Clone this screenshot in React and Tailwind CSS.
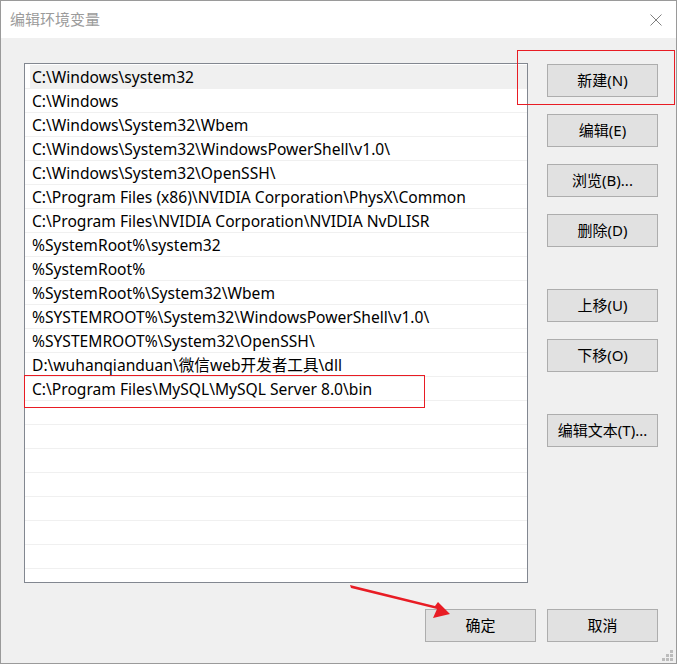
const paths = [
  "C:\\Windows\\system32",
  "C:\\Windows",
  "C:\\Windows\\System32\\Wbem",
  "C:\\Windows\\System32\\WindowsPowerShell\\v1.0\\",
  "C:\\Windows\\System32\\OpenSSH\\",
  "C:\\Program Files (x86)\\NVIDIA Corporation\\PhysX\\Common",
  "C:\\Program Files\\NVIDIA Corporation\\NVIDIA NvDLISR",
  "%SystemRoot%\\system32",
  "%SystemRoot%",
  "%SystemRoot%\\System32\\Wbem",
  "%SYSTEMROOT%\\System32\\WindowsPowerShell\\v1.0\\",
  "%SYSTEMROOT%\\System32\\OpenSSH\\",
  "D:\\wuhanqianduan\\微信web开发者工具\\dll",
  "C:\\Program Files\\MySQL\\MySQL Server 8.0\\bin",
];

const emptyRows = 8;

function Button({ children, className = "" }) {
  return (
    <button
      className={
        "flex h-[33px] w-[111px] items-center justify-center border border-[#adadad] bg-[#e1e1e1] text-[15px] text-black " +
        className
      }
    >
      {children}
    </button>
  );
}

function Grip() {
  // resize dots, bottom right
  const dots = [
    [8, 0],
    [4, 4],
    [8, 4],
    [0, 8],
    [4, 8],
    [8, 8],
  ];
  return (
    <svg width="11" height="11" className="absolute bottom-[2px] right-[3px]">
      {dots.map(([x, y], i) => (
        <rect key={i} x={x} y={y} width="3" height="3" fill="#bcbcbc" />
      ))}
    </svg>
  );
}

export default function App() {
  return (
    <div
      className="relative flex h-[664px] w-[677px] flex-col border border-[#9a9a9a] bg-[#f0f0f0]"
      style={{ fontFamily: '"Noto Sans", "Noto Sans CJK SC", sans-serif' }}
    >
      {/* TITLE BAR */}
      <div className="flex h-[37px] shrink-0 items-center justify-between bg-white pl-[9px] pr-[14px]">
        <span className="text-[15px] text-[#9b9b9b]">编辑环境变量</span>
        <svg width="12" height="12" viewBox="0 0 12 12">
          <path d="M0.5 0.5 L11.5 11.5 M11.5 0.5 L0.5 11.5" stroke="#808080" strokeWidth="1" />
        </svg>
      </div>

      {/* BODY */}
      <div className="flex flex-1 flex-col pl-[23px] pr-[18px] pt-[25px]">
        <div className="flex gap-[19px]">
          {/* LIST */}
          <div className="h-[520px] w-[504px] overflow-hidden border border-[#828790] bg-white pt-px">
            {paths.map((p, i) => (
              <div
                key={i}
                className="relative h-[24px] border-b border-[#f0f0f0] text-[15.6px] leading-[24px] text-black"
              >
                {i === 0 && <div className="absolute inset-y-0 left-[5px] right-0 bg-[#f0f0f0]" />}
                <span className="relative whitespace-nowrap pl-[7px]">{p}</span>
              </div>
            ))}
            {Array.from({ length: emptyRows }).map((_, i) => (
              <div key={"e" + i} className="h-[24px] border-b border-[#f0f0f0]" />
            ))}
          </div>

          {/* SIDE BUTTONS */}
          <div className="flex flex-col pt-[1px]">
            <Button>新建(N)</Button>
            <Button className="mt-[17px]">编辑(E)</Button>
            <Button className="mt-[17px]">浏览(B)...</Button>
            <Button className="mt-[17px]">删除(D)</Button>
            <Button className="mt-[42px]">上移(U)</Button>
            <Button className="mt-[17px]">下移(O)</Button>
            <Button className="mt-[42px]">编辑文本(T)...</Button>
          </div>
        </div>

        {/* FOOTER */}
        <div className="mt-[26px] flex justify-end gap-[11px]">
          <Button>确定</Button>
          <Button>取消</Button>
        </div>
      </div>

      {/* ANNOTATIONS */}
      <div className="pointer-events-none absolute left-[23px] top-[374px] h-[33px] w-[401px] border border-[#e81c24]" />
      <div className="pointer-events-none absolute left-[516px] top-[49px] h-[55px] w-[158px] border border-[#e81c24]" />
      <svg
        className="pointer-events-none absolute left-0 top-0"
        width="677"
        height="664"
      >
        <polygon points="349,584 350,587 436,608 432,617 449,613 437,601 434,605" fill="#e81c24" />
      </svg>

      <Grip />
    </div>
  );
}
